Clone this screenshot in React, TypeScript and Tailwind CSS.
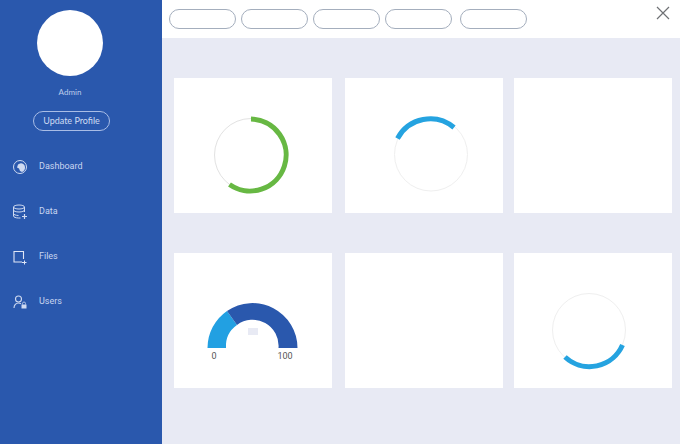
import { ReactNode } from "react";

const navItems: { label: string; icon: ReactNode }[] = [
  {
    label: "Dashboard",
    icon: (
      <svg width="16" height="16" viewBox="0 0 16 16" fill="none" stroke="#cfdaf1" strokeWidth="1">
        <circle cx="8" cy="8" r="6.500" />
        <path d="M8 4.500a4 4 0 0 1 5 3.500 5 5 0 0 1-3 5l-2-1-1-2.500-2-1 1-3z" fill="#cfdaf1" stroke="none" />
      </svg>
    ),
  },
  {
    label: "Data",
    icon: (
      <svg width="16" height="16" viewBox="0 0 16 16" fill="none" stroke="#cfdaf1" strokeWidth="1">
        <ellipse cx="7" cy="3" rx="5.500" ry="2" />
        <path d="M1.500 3v9c0 1.200 2.400 2 5 2h2M12.500 3v5M1.500 6c0 1.200 2.400 2 5.500 2s5.500-.8 5.500-2M1.500 9.500c0 1.200 2.400 2 5 2" />
        <path d="M10 12.500h5M12.500 10v5" strokeWidth="1.200" />
      </svg>
    ),
  },
  {
    label: "Files",
    icon: (
      <svg width="16" height="16" viewBox="0 0 16 16" fill="none" stroke="#dfe6f6" strokeWidth="1.100">
        <path d="M10 13H2V2.500h9.500V10" />
        <path d="M10 13.500h4.500M12.500 11.500v4" strokeWidth="1" />
      </svg>
    ),
  },
  {
    label: "Users",
    icon: (
      <svg width="16" height="16" viewBox="0 0 16 16" fill="none" stroke="#cfdaf1" strokeWidth="1.100">
        <circle cx="6.500" cy="5" r="3" />
        <path d="M2 14c0-3 2-5 4.500-5 1 0 1.800.3 2.500.8" />
        <rect x="9.500" y="10.500" width="5" height="4" fill="#cfdaf1" stroke="none" />
        <path d="M10.500 10.500V9.500a1.500 1.500 0 0 1 3 0v1" strokeWidth="0.800" />
      </svg>
    ),
  },
];

const pills = ["w-[67px]", "w-[67px] ml-[5px]", "w-[67px] ml-[5px]", "w-[67px] ml-[5px]", "w-[67px] ml-[8px]"];

function Sidebar() {
  return (
    <aside className="w-[162px] shrink-0 bg-[#2a58ad] pt-[10px] flex flex-col">
      <div className="w-[140px] flex flex-col items-center">
        <div className="w-[66px] h-[66px] rounded-full bg-white" />
        <p className="mt-[11px] text-[8px] leading-[10px] text-[#bccbeb]">Admin</p>
        <button className="mt-[14px] ml-[3px] w-[77px] h-[20px] rounded-full border border-[#a9bde6] text-[9px] text-[#d0dcf3]">
          Update Profile
        </button>
      </div>
      <nav className="mt-[13px] flex flex-col font-['Roboto',sans-serif]">
        {navItems.map((item) => (
          <div key={item.label} className="h-[45px] pl-[12px] flex items-center">
            <span className="w-[27px] flex items-center">{item.icon}</span>
            <span className="text-[9px] text-[#c9d6f0]">{item.label}</span>
          </div>
        ))}
      </nav>
    </aside>
  );
}

function Header() {
  return (
    <header className="h-[38px] bg-white pl-[7px] pr-[10px] flex items-start justify-between">
      <div className="flex pt-[9px]">
        {pills.map((cls, i) => (
          <div key={i} className={`${cls} h-[20px] rounded-full border border-[#a4aebd] bg-white`} />
        ))}
      </div>
      <svg className="mt-[6px]" width="14" height="14" viewBox="0 0 14 14" stroke="#6f7175" strokeWidth="1.200">
        <path d="M1 1l12 12M13 1L1 13" />
      </svg>
    </header>
  );
}

function Ring({
  cx,
  cy,
  arc,
  color,
  track,
}: {
  cx: number;
  cy: number;
  arc: string;
  color: string;
  track: string;
}) {
  return (
    <svg className="w-full h-full" viewBox="0 0 158 135" fill="none">
      <circle cx={cx} cy={cy} r="36.500" stroke={track} strokeWidth="1" />
      <path d={arc} stroke={color} strokeWidth="5" />
    </svg>
  );
}

function Gauge() {
  return (
    <svg className="w-full h-full" viewBox="0 0 158 135" fill="none">
      <path d="M33.500 95a45 45 0 0 1 19.500-37l10 14a26 26 0 0 0-11 23z" fill="#22a0e2" />
      <path d="M53 58a45 45 0 0 1 70.500 37h-19a26 26 0 0 0-41.500-23z" fill="#2a58ad" />
      <rect x="74" y="75" width="10" height="7" fill="#e8eaf4" />
      <text x="40" y="106" textAnchor="middle" fontSize="9" fill="#555" fontFamily="Roboto, sans-serif">
        0
      </text>
      <text x="111" y="106" textAnchor="middle" fontSize="9" fill="#555" fontFamily="Roboto, sans-serif">
        100
      </text>
    </svg>
  );
}

function Card({ children }: { children?: ReactNode }) {
  return <div className="w-[158px] h-[135px] bg-white">{children}</div>;
}

export default function App() {
  return (
    <div className="w-[680px] h-[444px] flex overflow-hidden bg-[#e8eaf4] font-['Lato',sans-serif]">
      <Sidebar />
      <main className="flex-1 flex flex-col">
        <Header />
        <div className="pt-[40px] pl-[12px] grid grid-cols-[171px_169px_158px] gap-y-[40px]">
          <Card>
            <Ring cx={77} cy={77} color="#67b843" track="#e2e2e2" arc="M77 41a36 36 0 1 1-21.500 65.500" />
          </Card>
          <Card>
            <Ring cx={86} cy={76.500} color="#25a3e0" track="#efefef" arc="M52.500 60.500a37 37 0 0 1 56.500-11" />
          </Card>
          <Card />
          <Card>
            <Gauge />
          </Card>
          <Card />
          <Card>
            <Ring cx={75} cy={77} color="#25a3e0" track="#efefef" arc="M51 104a36 36 0 0 0 57.500-12" />
          </Card>
        </div>
      </main>
    </div>
  );
}
